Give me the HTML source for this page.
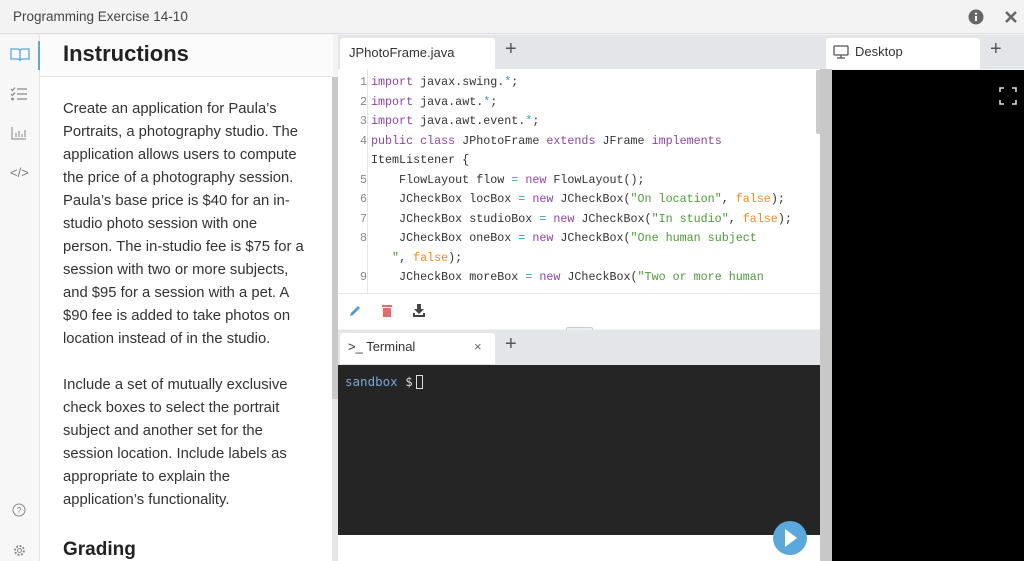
<!DOCTYPE html>
<html><head><meta charset="utf-8"><style>
*{box-sizing:border-box;margin:0;padding:0}
body{width:1024px;height:561px;overflow:hidden;background:#f3f3f3;font-family:"Liberation Sans",sans-serif;position:relative}
.a{position:absolute}
.code div{height:19.5px;line-height:19.5px;white-space:pre}
.k{color:#8e44ad}.s{color:#4e9a3a}.o{color:#f08a24}.p{color:#3a9dbb}
.txt{font-size:14.8px;line-height:23px;color:#333;white-space:nowrap}
</style></head><body>
<div class="a" style="left:0;top:0;width:1024px;height:34px;background:#f3f3f3;border-bottom:1px solid #ddd"></div>
<div class="a" style="left:13px;top:9px;font-size:13.5px;color:#444">Programming Exercise 14-10</div>
<svg class="a" style="left:968px;top:9px" width="16" height="16"><circle cx="8" cy="8" r="7.5" fill="#666"/><rect x="7" y="7" width="2" height="5" fill="#fff"/><circle cx="8" cy="4.6" r="1.1" fill="#fff"/></svg>
<svg class="a" style="left:1004px;top:10px" width="14" height="14"><path d="M2 2L12 12M12 2L2 12" stroke="#666" stroke-width="2.6"/></svg>

<div class="a" style="left:0;top:35px;width:40px;height:526px;background:#f7f7f7;border-right:1px solid #e3e3e3"></div>
<div class="a" style="left:38px;top:41px;width:2px;height:29px;background:#5aa9dc"></div>
<svg class="a" style="left:10px;top:47px" width="20" height="16"><path d="M1 2h6q3 0 3 2v10q0-2-3-2H1zM19 2h-6q-3 0-3 2v10q0-2 3-2h6z" fill="none" stroke="#5aa9dc" stroke-width="1.3"/></svg>
<svg class="a" style="left:10px;top:86px" width="18" height="16" stroke="#888" stroke-width="1.2" fill="none"><path d="M7 3h10M7 8h10M7 13h10M1 3l1.5 1.5L5 1.5M1 8l1.5 1.5L5 6.5"/><circle cx="2.5" cy="13" r=".8" fill="#888"/></svg>
<svg class="a" style="left:11px;top:126px" width="16" height="14" stroke="#999" stroke-width="1.2" fill="none"><path d="M1 1v12h14M5 11V7M8 11V5M11 11V8M14 11V4"/></svg>
<div class="a" style="left:10px;top:165px;font-size:13px;color:#777">&lt;/&gt;</div>
<svg class="a" style="left:12px;top:503px" width="14" height="14"><circle cx="7" cy="7" r="6" fill="none" stroke="#888"/><text x="7" y="10.5" font-size="9" text-anchor="middle" fill="#888" font-family="Liberation Sans">?</text></svg>
<svg class="a" style="left:13px;top:544px" width="13" height="13"><circle cx="6.5" cy="6.5" r="4.5" fill="none" stroke="#888" stroke-width="1.8" stroke-dasharray="2 1.5"/><circle cx="6.5" cy="6.5" r="2" fill="none" stroke="#888"/></svg>

<div class="a" style="left:40px;top:35px;width:293px;height:526px;background:#fff"></div>
<div class="a" style="left:40px;top:35px;width:293px;height:42px;border-bottom:1px solid #e3e3e3;background:#fbfbfb"></div>
<div class="a" style="left:63px;top:41px;font-size:22px;font-weight:bold;color:#222">Instructions</div>
<div class="a txt" style="left:63px;top:98px">Create an application for Paula’s<br>Portraits, a photography studio. The<br>application allows users to compute<br>the price of a photography session.<br>Paula’s base price is $40 for an in-<br>studio photo session with one<br>person. The in-studio fee is $75 for a<br>session with two or more subjects,<br>and $95 for a session with a pet. A<br>$90 fee is added to take photos on<br>location instead of in the studio.</div>
<div class="a txt" style="left:63px;top:374px">Include a set of mutually exclusive<br>check boxes to select the portrait<br>subject and another set for the<br>session location. Include labels as<br>appropriate to explain the<br>application’s functionality.</div>
<div class="a" style="left:63px;top:539px;font-size:19px;font-weight:bold;color:#222">Grading</div>
<div class="a" style="left:332px;top:77px;width:6px;height:484px;background:#e6e6e6"></div>
<div class="a" style="left:332px;top:77px;width:6px;height:322px;background:#c9c9c9"></div>

<div class="a" style="left:338px;top:35px;width:484px;height:34px;background:#e3e5e8"></div>
<div class="a" style="left:340px;top:38px;width:155px;height:31px;background:#fff;border-radius:3px 3px 0 0;font-size:13px;color:#333;padding:7px 0 0 9px">JPhotoFrame.java</div>
<div class="a" style="left:505px;top:38px;font-size:20px;color:#555">+</div>
<div class="a" style="left:338px;top:69px;width:482px;height:226px;background:#fff"></div>
<div class="a" style="left:340px;top:73px;width:27px;font:11.7px 'Liberation Mono',monospace;color:#888;text-align:right" >
<div class="code"><div>1</div><div>2</div><div>3</div><div>4</div><div> </div><div>5</div><div>6</div><div>7</div><div>8</div><div> </div><div>9</div></div></div>
<div class="a" style="left:367px;top:69px;width:1px;height:224px;background:#e5e5e5"></div>
<div class="a code" style="left:371px;top:73px;font:11.7px 'Liberation Mono',monospace;color:#333">
<div><span class="k">import</span> javax.swing.<span class="p">*</span>;</div>
<div><span class="k">import</span> java.awt.<span class="p">*</span>;</div>
<div><span class="k">import</span> java.awt.event.<span class="p">*</span>;</div>
<div><span class="k">public class</span> JPhotoFrame <span class="k">extends</span> JFrame <span class="k">implements</span></div>
<div>ItemListener {</div>
<div>    FlowLayout flow <span class="p">=</span> <span class="k">new</span> FlowLayout();</div>
<div>    JCheckBox locBox <span class="p">=</span> <span class="k">new</span> JCheckBox(<span class="s">"On location"</span>, <span class="o">false</span>);</div>
<div>    JCheckBox studioBox <span class="p">=</span> <span class="k">new</span> JCheckBox(<span class="s">"In studio"</span>, <span class="o">false</span>);</div>
<div>    JCheckBox oneBox <span class="p">=</span> <span class="k">new</span> JCheckBox(<span class="s">"One human subject</span></div>
<div><span class="s">   "</span>, <span class="o">false</span>);</div>
<div>    JCheckBox moreBox <span class="p">=</span> <span class="k">new</span> JCheckBox(<span class="s">"Two or more human</span></div>
</div>
<div class="a" style="left:338px;top:293px;width:482px;height:36px;background:#fff;border-top:1px solid #e5e5e5"></div>
<div class="a" style="left:816px;top:70px;width:5px;height:64px;background:#ccc;border-radius:2px"></div>
<svg class="a" style="left:348px;top:304px" width="14" height="14"><path d="M2 12l1-3 7-7 2 2-7 7z" fill="#4a9bd8"/></svg>
<svg class="a" style="left:381px;top:304px" width="12" height="14"><rect x="1" y="1" width="10" height="2" fill="#e86a6a"/><rect x="2" y="4" width="8" height="9" fill="#e86a6a"/></svg>
<svg class="a" style="left:412px;top:303px" width="14" height="15"><path d="M5 1h4v5h3l-5 5-5-5h3z M1 10v4h12v-4h-2v2H3v-2z" fill="#444"/></svg>
<div class="a" style="left:566px;top:327px;width:27px;height:5px;border:1px solid #ccc;border-radius:2px;background:#eee"></div>

<div class="a" style="left:338px;top:330px;width:484px;height:35px;background:#e3e5e8"></div>
<div class="a" style="left:340px;top:333px;width:155px;height:31px;background:#fff;border-radius:3px 3px 0 0;font-size:13px;color:#333;padding:6px 0 0 8px">&gt;_ Terminal<span style="position:absolute;left:134px;top:6px;color:#666">×</span></div>
<div class="a" style="left:505px;top:333px;font-size:20px;color:#555">+</div>
<div class="a" style="left:338px;top:365px;width:482px;height:170px;background:#252525"></div>
<div class="a" style="left:345px;top:374px;font:12.5px 'DejaVu Sans Mono',monospace;color:#7aa6cf">sandbox <span style="color:#ddd">$</span></div>
<div class="a" style="left:416px;top:375px;width:7px;height:14px;border:1px solid #ddd"></div>
<div class="a" style="left:338px;top:535px;width:482px;height:26px;background:#fff"></div>
<svg class="a" style="left:772px;top:520px" width="36" height="36"><circle cx="18" cy="18" r="17" fill="#5aa9dc"/><path d="M13 9l12 9-12 9z" fill="#fff"/></svg>

<div class="a" style="left:820px;top:69px;width:12px;height:492px;background:#c8c8c8"></div>
<div class="a" style="left:822px;top:35px;width:202px;height:34px;background:#e3e5e8"></div>
<div class="a" style="left:826px;top:38px;width:154px;height:31px;background:#fff;border-radius:3px 3px 0 0;font-size:13px;color:#333;padding:6px 0 0 29px">Desktop</div>
<svg class="a" style="left:833px;top:45px" width="16" height="14" fill="none" stroke="#555" stroke-width="1.3"><rect x="1" y="1" width="14" height="9" rx="1"/><path d="M8 10v3M4 13h8"/></svg>
<div class="a" style="left:990px;top:38px;font-size:20px;color:#555">+</div>
<div class="a" style="left:832px;top:70px;width:192px;height:491px;background:#000"></div>
<svg class="a" style="left:999px;top:87px" width="18" height="18" fill="none" stroke="#ddd" stroke-width="1.6"><path d="M1 5V1h4M13 1h4v4M17 13v4h-4M5 17H1v-4"/></svg>
</body></html>
